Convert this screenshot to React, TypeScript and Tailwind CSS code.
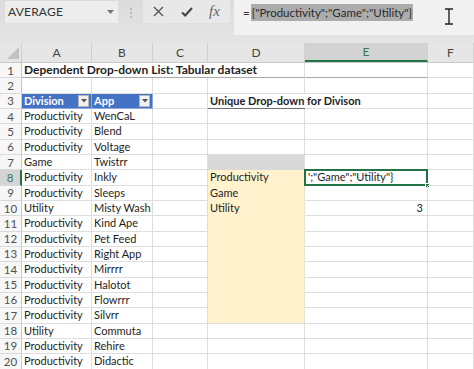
import React from "react";
import { twMerge } from "tailwind-merge";

const font = "font-['Lato','Liberation_Sans',sans-serif]";

const cols = [
  { key: "A", w: "w-[70px]" },
  { key: "B", w: "w-[61px]" },
  { key: "C", w: "w-[55px]" },
  { key: "D", w: "w-[97px]" },
  { key: "E", w: "w-[123px]" },
  { key: "F", w: "w-[46px]" },
];

const data: [string, string][] = [
  ["Productivity", "WenCaL"],
  ["Productivity", "Blend"],
  ["Productivity", "Voltage"],
  ["Game", "Twistrr"],
  ["Productivity", "Inkly"],
  ["Productivity", "Sleeps"],
  ["Utility", "Misty Wash"],
  ["Productivity", "Kind Ape"],
  ["Productivity", "Pet Feed"],
  ["Productivity", "Right App"],
  ["Productivity", "Mirrrr"],
  ["Productivity", "Halotot"],
  ["Productivity", "Flowrrr"],
  ["Productivity", "Silvrr"],
  ["Utility", "Commuta"],
  ["Productivity", "Rehire"],
  ["Productivity", "Didactic"],
];

const unique: Record<number, string> = { 8: "Productivity", 9: "Game", 10: "Utility" };

function Cell({ w, className = "", children }: { w: string; className?: string; children?: React.ReactNode }) {
  return (
    <div
      className={twMerge(
        "relative h-full shrink-0 border-r border-b border-[#dedede] flex items-center px-[2px] whitespace-nowrap",
        w,
        className
      )}
    >
      {children}
    </div>
  );
}

function RowHead({ n, active = false }: { n: number; active?: boolean }) {
  return (
    <div
      className={twMerge(
        "h-full w-[22px] shrink-0 flex items-center justify-center border-b border-r border-[#dadada] border-r-[#c8c8c8] bg-[#f7f7f7] text-[11.5px] text-[#505050]",
        active && "bg-[#d4d4d4] text-[#3c7a56] border-r-2 border-r-[#217346]"
      )}
    >
      {n}
    </div>
  );
}

function FilterBtn() {
  return (
    <div className="absolute right-[2px] top-1/2 -translate-y-1/2 w-[11px] h-[12px] bg-[#f1f1f1] border border-[#b5b5b5] flex items-center justify-center">
      <svg width="6" height="4" viewBox="0 0 6 4">
        <path d="M0 0h6L3 3.5z" fill="#555" />
      </svg>
    </div>
  );
}

function Toolbar() {
  return (
    <div className="h-[43px] bg-gradient-to-b from-[#dcdcdc] to-[#e4e4e4] flex items-start">
      <div className="ml-[5px] mt-[1px] w-[113px] h-[22px] bg-[#ededed] flex items-center pl-[3px] pr-[4px] text-[12px] text-[#333] tracking-[0.2px]">
        <span className="flex-1">AVERAGE</span>
        <svg width="7" height="4" viewBox="0 0 7 4">
          <path d="M0 0h7L3.5 4z" fill="#777" />
        </svg>
      </div>
      <div className="ml-[12px] mt-[8px] flex flex-col gap-[2px]">
        <div className="w-[2px] h-[2px] bg-[#b9b9b9]" />
        <div className="w-[2px] h-[2px] bg-[#b9b9b9]" />
        <div className="w-[2px] h-[2px] bg-[#b9b9b9]" />
      </div>
      <div className="ml-[11px] w-[87px] h-[23px] bg-[#e8e8e8] flex items-center">
        <svg className="ml-[10px]" width="11" height="11" viewBox="0 0 11 11">
          <path d="M1 1l9 9M10 1l-9 9" stroke="#555" strokeWidth="1.4" />
        </svg>
        <svg className="ml-[17px]" width="12" height="10" viewBox="0 0 12 10">
          <path d="M1 5.5l3.2 3L11 1" stroke="#444" strokeWidth="2" fill="none" />
        </svg>
        <span className="ml-[16px] text-[15px] italic text-[#666] font-['Liberation_Serif',serif] leading-none">fx</span>
      </div>
      <div className="ml-[4px] flex-1 h-[35px] bg-[#f1f1f1] flex items-start pt-[4px] pl-[9px] text-[11.5px] text-[#333] relative">
        <span>=</span>
        <span className="bg-[#acacac] text-[#2a2a2a] px-[1px] ml-[1px]">{'{"Productivity";"Game";"Utility"}'}</span>
        <svg className="absolute left-[210px] top-[8px]" width="10" height="17" viewBox="0 0 10 17">
          <path d="M1 1h8M1 16h8M5 1v15" stroke="#222" strokeWidth="1.4" />
        </svg>
      </div>
    </div>
  );
}

function ColHeaders() {
  return (
    <div className="h-[20px] flex bg-[#e6e6e6] border-b border-[#c9c9c9] text-[12px] text-[#444]">
      <div className="w-[22px] h-full shrink-0 border-r border-[#cfcfcf] relative">
        <svg className="absolute right-[2px] bottom-[3px]" width="12" height="12" viewBox="0 0 12 12">
          <path d="M12 0V12H0z" fill="#c2c2c2" />
        </svg>
      </div>
      {cols.map((c) => (
        <div
          key={c.key}
          className={twMerge(
            "h-full shrink-0 flex items-center justify-center border-r border-[#d0d0d0]",
            c.w,
            c.key === "E" && "bg-[#d3d3d3] text-[#3c7a56] border-b-2 border-b-[#217346]"
          )}
        >
          {c.key}
        </div>
      ))}
    </div>
  );
}

export default function App() {
  return (
    <div className={`w-[474px] h-[369px] overflow-hidden bg-white ${font} text-[11px] text-[#1e1e1e]`}>
      <Toolbar />
      <ColHeaders />

      {/* row 1 */}
      <div className="flex h-[15.34px]">
        <RowHead n={1} />
        <Cell w="w-[283px]" className="font-bold text-[12px] border-b-[#a8a8a8]">
          Dependent Drop-down List: Tabular dataset
        </Cell>
        <Cell w="w-[123px]" className="border-b-[#a8a8a8]" />
        <Cell w="w-[46px]" />
      </div>

      {/* row 2 */}
      <div className="flex h-[15.34px]">
        <RowHead n={2} />
        {cols.map((c) => (
          <Cell key={c.key} w={c.w} />
        ))}
      </div>

      {/* row 3 */}
      <div className="flex h-[15.34px]">
        <RowHead n={3} />
        <Cell w="w-[70px]" className="bg-[#4472c4] text-white font-bold border-[#8eaadb]">
          Division
          <FilterBtn />
        </Cell>
        <Cell w="w-[61px]" className="bg-[#4472c4] text-white font-bold border-[#8eaadb]">
          App
          <FilterBtn />
        </Cell>
        <Cell w="w-[55px]" />
        <Cell w="w-[97px]" className="font-bold border-r-0 border-b-[#6e6e6e] overflow-visible z-10">
          Unique Drop-down for Divison
        </Cell>
        <Cell w="w-[123px]" />
        <Cell w="w-[46px]" />
      </div>

      {data.map(([div, app], i) => {
        const n = i + 4;
        const yellow = n >= 8 && n <= 17;
        return (
          <div key={n} className="flex h-[15.34px]">
            <RowHead n={n} active={n === 8} />
            <Cell w="w-[70px]">{div}</Cell>
            <Cell w="w-[61px]">{app}</Cell>
            <Cell w="w-[55px]" />
            <Cell
              w="w-[97px]"
              className={twMerge(
                n === 7 && "bg-[#d9d9d9] border-b-[#d9d9d9]",
                yellow && "bg-[#fff2cc] border-b-[#fff2cc] border-r-[#e9e2cc]",
                n === 17 && "border-b-[#dedede]"
              )}
            >
              {unique[n] ?? ""}
            </Cell>
            <Cell w="w-[123px]" className={n === 10 ? "justify-end pr-[4px]" : ""}>
              {n === 8 && (
                <>
                  <span className="pl-[1px]">{`';"Game";"Utility"}`}</span>
                  <div className="absolute -left-[1px] -top-[1px] -right-[1px] -bottom-[1px] border-2 border-[#217346]" />
                  <div className="absolute -right-[3px] -bottom-[3px] w-[5px] h-[5px] bg-[#217346] border border-white" />
                </>
              )}
              {n === 10 && "3"}
            </Cell>
            <Cell w="w-[46px]" />
          </div>
        );
      })}
    </div>
  );
}
